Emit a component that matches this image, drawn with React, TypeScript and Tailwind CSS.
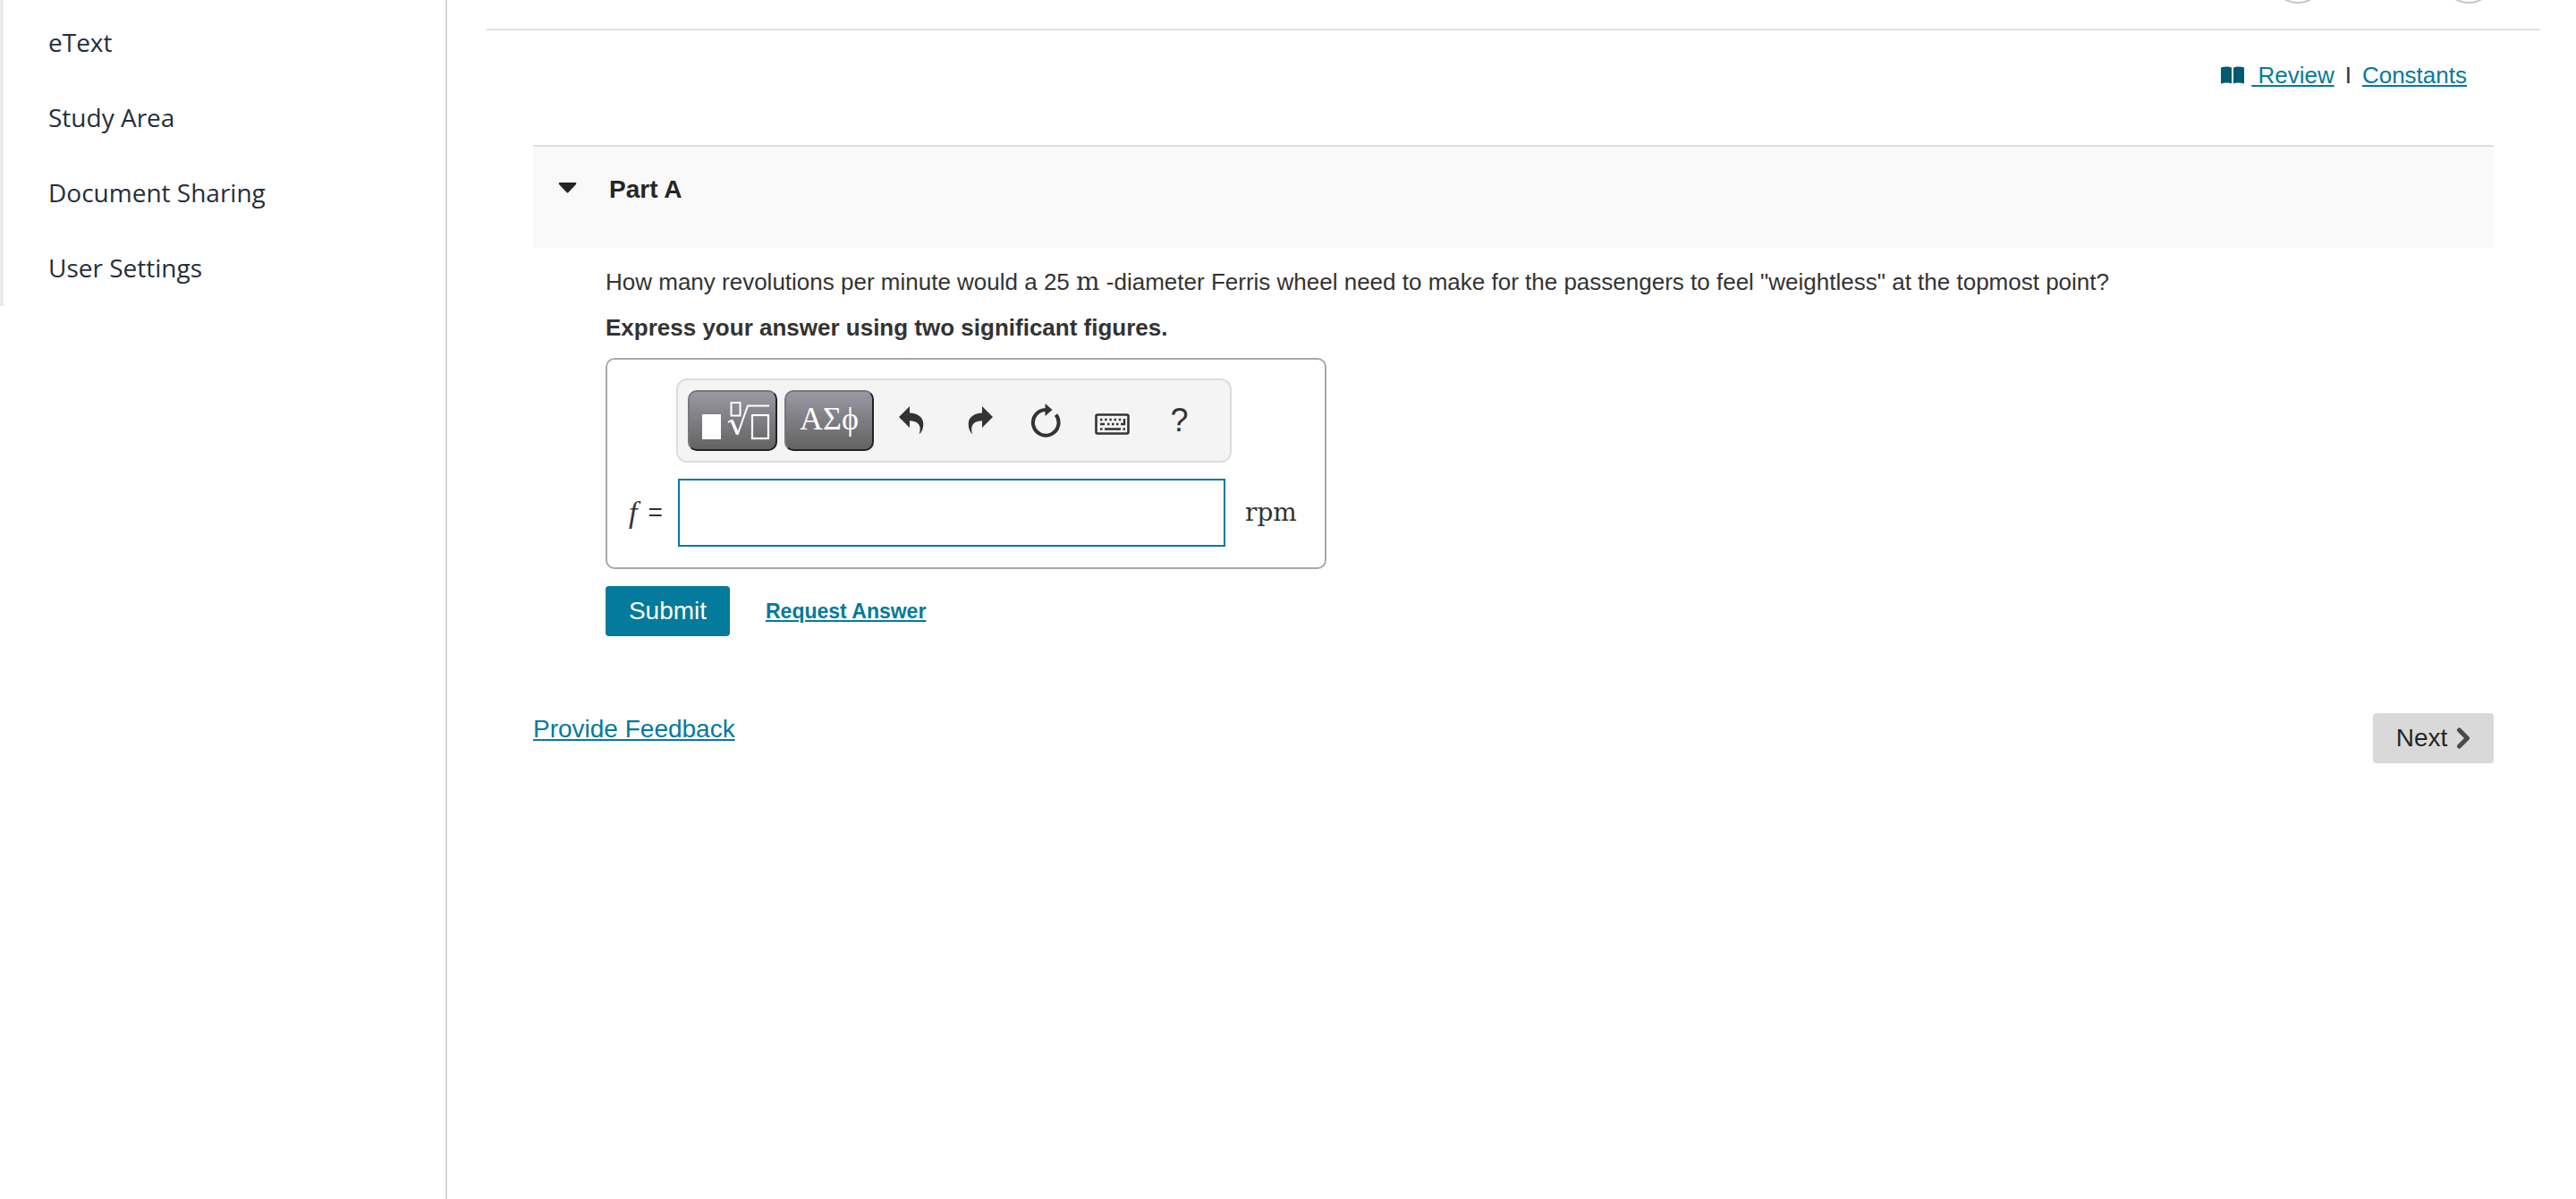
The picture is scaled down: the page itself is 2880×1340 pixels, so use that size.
import * as React from "react";

const menuItems = ["eText", "Study Area", "Document Sharing", "User Settings"];

const linkStyle = "text-[#047a9c] underline decoration-2 underline-offset-2";

function BookIcon() {
  return (
    <svg width="26" height="20" viewBox="0 0 26 20" fill="#005a70" aria-hidden="true">
      <path d="M0 1.5C4 0 9 0 12 1.5V19.5C9 18.3 4 18.3 0 19.5Z" />
      <path d="M14 1.5C17 0 22 0 26 1.5V19.5C22 18.3 17 18.3 14 19.5Z" />
    </svg>
  );
}

function TemplateIcon() {
  return (
    <svg width="76" height="44" viewBox="0 0 76 44" fill="none" stroke="#fff" aria-hidden="true">
      <rect x="0" y="15" width="21" height="28" fill="#fff" stroke="none" />
      <rect x="32.5" y="2" width="10" height="14.5" strokeWidth="2" />
      <path d="M29 24L33 21.5" strokeWidth="2" />
      <path d="M33 21.5L39.5 37" strokeWidth="3.5" />
      <path d="M39.5 38L51 5.5H75" strokeWidth="2" />
      <rect x="56" y="16" width="18" height="26" strokeWidth="2.2" />
    </svg>
  );
}

function UndoIcon() {
  return (
    <svg width="28" height="32" viewBox="0 0 28 32" fill="#333" aria-hidden="true">
      <path d="M0 12L12 0V7.5C21 8 27 12 27.3 19.5C27.4 25 25.5 29 22.5 31.5C25 25 24.5 16.5 12 16.2V24Z" />
    </svg>
  );
}

function RedoIcon() {
  return (
    <svg width="28" height="32" viewBox="-2 0 28 32" fill="#333" overflow="visible" aria-hidden="true">
      <path d="M28 12L16 0V7.5C7 8 1 12 .7 19.5C.6 25 2.5 29 5.5 31.5C3 25 3.5 16.5 16 16.2V24Z" />
    </svg>
  );
}

function ResetIcon() {
  return (
    <svg width="34" height="38" viewBox="0 0 34 38" fill="none" aria-hidden="true">
      <path d="M17 7A14.3 14.3 0 1 0 28.5 12.5" stroke="#333" strokeWidth="4" />
      <path d="M16.500 0L24.500 7L16.500 14Z" fill="#333" />
    </svg>
  );
}

function KeyboardIcon() {
  return (
    <svg width="39" height="32" viewBox="0 -8 39 32" fill="none" stroke="#333" aria-hidden="true">
      <rect x="1.5" y="1.5" width="36" height="21" rx="1.5" strokeWidth="2.6" />
      <path d="M6 7H30" strokeWidth="2.4" strokeDasharray="2.4 2.8" />
      <path d="M6 12H11M14 12H16.5M19 12H21.5M24 12H26.5M29 12H33V6" strokeWidth="2.4" />
      <path d="M6 17.5H8.5M11 17.5H29M31.5 17.5H34" strokeWidth="2.4" />
    </svg>
  );
}

function ToolButton({ label, children }: { label: string; children: React.ReactNode }) {
  return (
    <button type="button" aria-label={label} className="flex h-17 w-[75px] items-center justify-center">
      {children}
    </button>
  );
}

function Sidebar() {
  return (
    <aside className="flex w-[500px] shrink-0 items-start border-r-2 border-[#d9d9d9]">
      <nav className="w-full border-l-4 border-[#e9eaee] pt-1.5">
        <ul>
          {menuItems.map((item) => (
            <li key={item} className="h-21">
              <a
                href="#"
                className="block pl-[50px] pt-5 font-['Open_Sans','Noto_Sans',sans-serif] text-[28px] leading-[42px] text-[#252f3a]"
              >
                {item}
              </a>
            </li>
          ))}
        </ul>
      </nav>
    </aside>
  );
}

function AnswerBox() {
  return (
    <div className="flex h-[236px] w-[806px] flex-col gap-[18px] rounded-[10px] border-2 border-[#a9a9a9] pt-[21px]">
      <div className="ml-[77px] flex h-[94px] w-[621px] items-center rounded-xl border-2 border-[#dcdcdc] bg-[#f4f4f4] pl-[11px]">
        <button
          type="button"
          aria-label="Templates"
          className="flex h-17 w-[100px] items-center justify-center rounded-[10px] border-2 border-t-[#777] border-r-[#222] border-b-[#222] border-l-[#777] bg-linear-to-b from-[#9b98a3] to-[#636363] pl-2"
        >
          <TemplateIcon />
        </button>
        <button
          type="button"
          aria-label="Symbols"
          className="mr-1 ml-2 h-17 w-[100px] rounded-[10px] border-2 border-t-[#777] border-r-[#222] border-b-[#222] border-l-[#777] bg-linear-to-b from-[#9b98a3] to-[#636363] pb-1 font-['Liberation_Serif',serif] text-[36px] leading-10 text-white"
        >
          ΑΣϕ
        </button>
        <ToolButton label="undo"><UndoIcon /></ToolButton>
        <ToolButton label="redo"><RedoIcon /></ToolButton>
        <ToolButton label="reset"><ResetIcon /></ToolButton>
        <ToolButton label="keyboard shortcuts"><KeyboardIcon /></ToolButton>
        <ToolButton label="help">
          <span className="text-[36px] leading-10">?</span>
        </ToolButton>
      </div>
      <div className="flex items-center">
        <label htmlFor="answer" className="flex w-[79px] items-center gap-3 pl-6 text-[28px]">
          <i className="font-['Liberation_Serif',serif] text-[34px] leading-10">f</i>
          <span>=</span>
        </label>
        <input
          id="answer"
          type="text"
          className="h-[76px] w-[612px] border-2 border-[#047a9c] bg-white px-3 text-[28px] outline-none"
        />
        <span className="pl-[22px] font-['DejaVu_Serif',serif] text-[28px]">rpm</span>
      </div>
    </div>
  );
}

function PartA() {
  return (
    <section>
      <header className="flex h-[115px] items-start border-t-2 border-[#dedede] bg-[#f9f9f9] pt-7">
        <button type="button" className="flex items-center text-[#252525]">
          <svg width="21" height="16" viewBox="0 0 21 16" fill="currentColor" className="mr-9 ml-7" aria-hidden="true">
            <path d="M1.5 0H19.5Q21 .5 20 2L11.5 11Q10.5 12 9.5 11L1 2Q0 .5 1.5 0Z" />
          </svg>
          <span className="text-[28px] leading-10 font-bold">Part A</span>
        </button>
      </header>
      <div className="pl-[81px]">
        <p className="mt-4 text-[26px] leading-[44px]">
          How many revolutions per minute would a 25{" "}
          <span className="font-['DejaVu_Serif',serif] text-[28px]">m</span> -diameter Ferris wheel need to make for the
          passengers to feel "weightless" at the topmost point?
        </p>
        <p className="mt-[7px] mb-3 text-[26px] leading-[44px] font-bold">
          Express your answer using two significant figures.
        </p>
        <AnswerBox />
        <div className="mt-[19px] flex items-center gap-10">
          <button type="button" className="h-14 w-[139px] rounded-sm bg-[#047a9c] text-[28px] text-white">
            Submit
          </button>
          <a href="#" className={`${linkStyle} text-[23px] leading-8 font-bold`}>
            Request Answer
          </a>
        </div>
      </div>
    </section>
  );
}

export default function App() {
  return (
    <div className="flex min-h-screen bg-white font-['Liberation_Sans',Arial,sans-serif] text-[#333]">
      <Sidebar />
      <main className="min-w-0 grow pr-10 pl-11">
        {/* Lower edge of the pager, scrolled mostly out of view */}
        <div className="flex h-[34px] items-start justify-end gap-[131px] overflow-hidden border-b-2 border-[#dedede] pr-[50px]">
          <button type="button" aria-label="Previous item" className="-mt-14 size-15 shrink-0 rounded-full border-2 border-[#c7c7c7]" />
          <button type="button" aria-label="Next item" className="-mt-14 size-15 shrink-0 rounded-full border-2 border-[#c7c7c7]" />
        </div>

        <div className="pr-[52px] pl-[52px]">
          <div className="flex h-32 items-start justify-end pt-8 pr-[30px] text-[26px] leading-9">
            <span className="mr-2 flex h-9 items-center"><BookIcon /></span>
            <a href="#" className={linkStyle}>&nbsp;Review</a>
            <span className="mx-3">I</span>
            <a href="#" className={linkStyle}>Constants</a>
          </div>

          <PartA />

          <div className="mt-[86px] flex items-start justify-between">
            <a href="#" className={`${linkStyle} text-[28px] leading-9`}>
              Provide Feedback
            </a>
            <button
              type="button"
              className="flex h-14 w-[135px] items-center justify-center gap-2.5 rounded-sm bg-[#d9d9d9] text-[28px] text-[#252525]"
            >
              Next
              <svg width="16" height="24" viewBox="0 0 16 24" fill="none" stroke="#4a4a4a" strokeWidth="5" strokeLinecap="round" strokeLinejoin="round" aria-hidden="true">
                <path d="M3.5 3L12.5 12L3.5 21" />
              </svg>
            </button>
          </div>
        </div>
      </main>
    </div>
  );
}
